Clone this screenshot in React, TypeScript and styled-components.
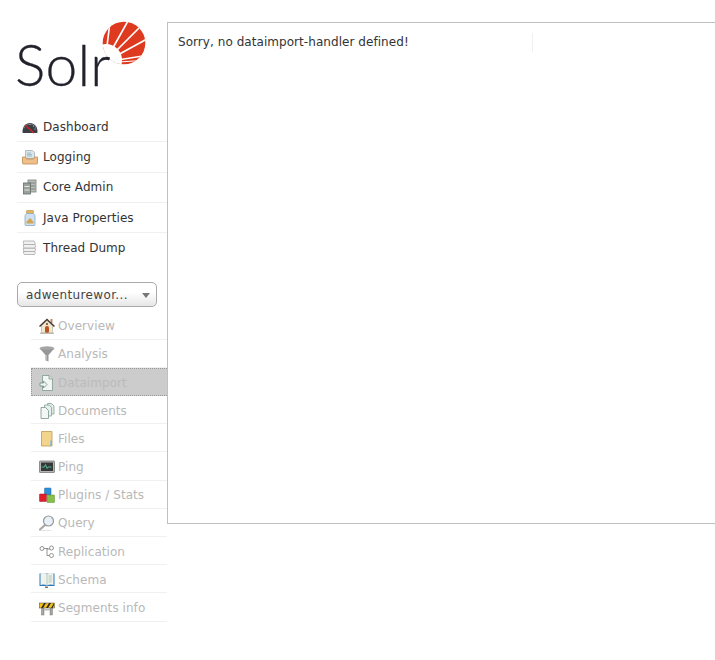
import React from "react";
import styled, {createGlobalStyle} from "styled-components";

const GlobalStyle = createGlobalStyle`
  html, body {
    margin: 0;
    padding: 0;
    height: 100%;
    overflow: hidden;
    background: #fff;
  }
  body {
    font-family: "DejaVu Sans", Verdana, sans-serif;
    font-size: 12px;
    letter-spacing: .055px;
    color: #333;
  }
`;

const Page = styled.div`
  display: flex;
  align-items: flex-start;
  width: 715px;
  height: 660px;
`;

const Sidebar = styled.aside`
  width: 167px;
  flex: none;
  padding-left: 17px;
  box-sizing: border-box;
`;

const LogoLink = styled.a`
  display: block;
  height: 112px;
  margin-left: -4px;
  padding-top: 21px;
  box-sizing: border-box;

  svg {
    display: block;
  }
`;

const MainMenu = styled.ul`
  list-style: none;
  margin: 0;
  padding: 0;
`;

const MainItem = styled.li`
  display: flex;
  align-items: center;
  gap: 5px;
  height: 30.3px;
  box-sizing: border-box;
  padding-left: 5px;
  border-bottom: 1px solid #f0f0f0;
  color: #333;

  &:last-child {
    border-bottom: none;
  }
`;

const CoreSelect = styled.div`
  display: flex;
  align-items: center;
  justify-content: space-between;
  width: 140px;
  height: 25px;
  box-sizing: border-box;
  margin-top: 19px;
  padding: 0 6px 0 8px;
  border: 1px solid #aaa;
  border-radius: 5px;
  background: linear-gradient(to bottom, #fff 0%, #fff 40%, #e6e6e6 100%);
  color: #444;
  letter-spacing: .35px;
`;

const Caret = styled.span`
  width: 0;
  height: 0;
  margin-top: 2px;
  border-left: 4.5px solid transparent;
  border-right: 4.5px solid transparent;
  border-top: 5px solid #777;
`;

const CoreMenu = styled.ul`
  list-style: none;
  margin: 4px 0 0 14px;
  padding: 0;
`;

const CoreItem = styled.li<{$active?: boolean}>`
  display: flex;
  align-items: center;
  gap: 3px;
  height: 28.2px;
  box-sizing: border-box;
  padding: 2px 0 0 ${({$active}) => $active ? "7px" : "8px"};
  color: ${({$active}) => $active ? "#bbb" : "#b8b8b8"};
  background: ${({$active}) => $active ? "#ccc" : "transparent"};
  border-bottom: ${({$active}) => $active ? "1px dotted #999" : "1px solid #f0f0f0"};
  border-top: ${({$active}) => $active ? "1px dotted #999" : "none"};
  border-left: ${({$active}) => $active ? "1px dotted #999" : "none"};
`;

const Content = styled.main`
  flex: 1;
  height: 502px;
  margin-top: 22px;
  box-sizing: border-box;
  padding: 10px;
  border: 1px solid #c0c0c0;
  border-right: none;
`;

const Message = styled.div`
  width: 355px;
  height: 19px;
  line-height: 19px;
  box-sizing: border-box;
  border-right: 1px solid #f0f0f0;
  color: #333;
`;

const Icon = styled.svg`
  display: block;
  flex: none;
  width: 16px;
  height: 16px;
`;

const rays: [number, number][] = [
    [110, 22],
    [128.5, 20],
    [141, 26],
    [147, 39],
    [146, 55.5],
];

const SolrLogo = () => (
    <svg width="136" height="80" viewBox="13 21 136 80" role="img" aria-label="Solr">
        <defs>
            <clipPath id="sun">
                <circle cx="124" cy="43" r="21.3"/>
            </clipPath>
        </defs>
        <g clipPath="url(#sun)">
            <rect x="100" y="20" width="50" height="46" fill="#dd3a20"/>
            <circle cx="106" cy="60" r="16" fill="#fff"/>
            {rays.map(([x, y]) => (
                <line key={x} x1="105" y1="62" x2={x} y2={y} stroke="#fff" strokeWidth="1.7"/>
            ))}
            <line x1="105" y1="63" x2="148" y2="60" stroke="#fff" strokeWidth="1"/>
        </g>
        <text x="15" y="86" fontFamily="Lato, sans-serif" fontWeight="300" fontSize="57" letterSpacing=".2" stroke="#22222c" strokeWidth=".3" fill="#22222c">Solr</text>
    </svg>
);

const Dashboard = () => (
    <Icon viewBox="0 0 16 16">
        <path d="M.5 13C.5 7.500 3.500 4 8 4s7.500 3.500 7.500 9c0 .7-.4 1-1 1h-13c-.6 0-1-.3-1-1z" fill="#3a3f46"/>
        <path d="M2 9.500C3 6.500 5 5 8 5s5 1.500 6 4.500" fill="none" stroke="#6b7077" strokeWidth="1"/>
        <path d="M3 6l9 8" stroke="#d8202a" strokeWidth="1.300"/>
        <circle cx="8" cy="5.500" r=".6" fill="#ccc"/><circle cx="11.500" cy="7" r=".6" fill="#ccc"/><circle cx="13" cy="10" r=".6" fill="#ccc"/>
    </Icon>
);

const Logging = () => (
    <Icon viewBox="0 0 16 16">
        <path d="M3.500 1.500h7l2 2v6h-9z" fill="#dbe6ea" stroke="#9db0b8" strokeWidth=".8"/>
        <path d="M5 4h4M5 5.500h5M5 7h5" stroke="#8fb0c0" strokeWidth=".8"/>
        <path d="M.5 8h3l1 2h7l1-2h3v6.200q0 .8-.8.8H1.300q-.8 0-.8-.8z" fill="#edc08a" stroke="#c08a50" strokeWidth=".8"/>
    </Icon>
);

const CoreAdmin = () => (
    <Icon viewBox="0 0 16 16">
        <rect x="6" y="1" width="8" height="12" fill="#b8bdb8" stroke="#7b827c" strokeWidth=".8"/>
        <path d="M7 4h6M7 7h6M7 10h6" stroke="#6d746e" strokeWidth=".8"/>
        <rect x="1.500" y="4" width="7" height="11" fill="#9aa19b" stroke="#666d68" strokeWidth=".8"/>
        <path d="M2.500 7.500h5M2.500 11h5" stroke="#e6e8e6" strokeWidth="1"/>
    </Icon>
);

const JavaProperties = () => (
    <Icon viewBox="0 0 16 16">
        <rect x="4.500" y="0.500" width="7" height="3" rx=".8" fill="#e3b45c" stroke="#b88a3a" strokeWidth=".6"/>
        <path d="M4.500 3.500h7l1.500 2v9q0 1-1 1H4q-1 0-1-1v-9z" fill="#cfe0f0" stroke="#8aa8c6" strokeWidth=".8"/>
        <path d="M4.500 13.500v-2l1.500-1 1-2h2l1 2 1.500 1v2z" fill="#d2a552"/>
    </Icon>
);

const ThreadDump = () => (
    <Icon viewBox="0 0 16 16">
        <g fill="#f1f1f1" stroke="#a8a8a8" strokeWidth=".8">
            <path d="M1.500 11.500h11q1.500 1.500 0 3h-10q-1.500-1.500-1-3z"/>
            <path d="M1.500 8h11.500q1 1.500 0 3.500H2q-1-2-.5-3.500z"/>
            <path d="M1.500 4.500h11.500q1 1.500 0 3.500H2q-1-2-.5-3.500z"/>
            <path d="M1.500 1h10.500q1.500 1.500 1 3.500H2q-1-2-.5-3.500z"/>
        </g>
    </Icon>
);

const Overview = () => (
    <Icon viewBox="0 0 16 16">
        <rect x="11.500" y="1" width="2" height="4" fill="#b98a68"/>
        <path d="M2.500 15V7.500L8 2.500l5.500 5V15z" fill="#f0e6d2" stroke="#a89878" strokeWidth=".5"/>
        <path d="M.5 8.500L8 1.500l7.500 7" fill="none" stroke="#4a3a30" strokeWidth="1.500"/>
        <rect x="6" y="8" width="4" height="7" rx="1.800" fill="#b8551f"/>
        <rect x="7" y="5" width="2" height="2" fill="#8a6a50"/>
        <rect x="1" y="14.700" width="14" height="1" fill="#a8a8a0"/>
    </Icon>
);

const Analysis = () => (
    <Icon viewBox="0 0 16 16">
        <ellipse cx="8" cy="2.500" rx="7" ry="1.800" fill="#a8a8a8" stroke="#808080" strokeWidth=".5"/>
        <path d="M1.200 3l5.300 6v5.500l3 1V9l5.300-6q-6.800 2-13.600 0z" fill="#979797"/>
        <path d="M7.500 9v6" stroke="#c4c4c4" strokeWidth=".8"/>
    </Icon>
);

const Dataimport = () => (
    <Icon viewBox="0 0 16 16">
        <path d="M3.500 .5h6.500l3.500 3.500v11.500h-10z" fill="#f2f6f2" stroke="#7e9a90" strokeWidth=".8"/>
        <path d="M10 .5V4h3.500" fill="#d6e4dc" stroke="#7e9a90" strokeWidth=".8"/>
        <path d="M1 8h3.500V6l3.500 3.500L4.500 13v-2H1z" fill="#f2f6f2" stroke="#6b8a7e" strokeWidth=".8"/>
    </Icon>
);

const Documents = () => (
    <Icon viewBox="0 0 16 16">
        <path d="M8.500 .5h4l2.500 2.500v8h-6.500z" fill="#dfe9e6" stroke="#87a19a" strokeWidth=".8"/>
        <path d="M5.500 2h4.500l2.500 2.500v8.500h-7z" fill="#e8f0ed" stroke="#87a19a" strokeWidth=".8"/>
        <path d="M2 4.500h4.500L9.500 7.500v8H2z" fill="#f3f7f5" stroke="#7a958e" strokeWidth=".8"/>
    </Icon>
);

const Files = () => (
    <Icon viewBox="0 0 16 16">
        <path d="M2.500 .5h10.500v14.500H2.500z" fill="#f2d48c" stroke="#c09a50" strokeWidth=".8"/>
        <path d="M13 8.500v6.500h-1.700v-5z" fill="#7fb6e0"/>
    </Icon>
);

const Ping = () => (
    <Icon viewBox="0 0 16 16">
        <rect x=".5" y="2" width="15" height="11.500" rx=".6" fill="#b5b5b5" stroke="#7a7a7a" strokeWidth=".8"/>
        <rect x="2" y="3.500" width="12" height="8.500" fill="#34393a"/>
        <path d="M2.500 8h3l1-2.500 1.500 4 1-1.500h3.500" fill="none" stroke="#5fd0a8" strokeWidth=".8"/>
    </Icon>
);

const Plugins = () => (
    <Icon viewBox="0 0 16 16">
        <rect x="5.500" y="1" width="6.500" height="7" rx=".5" fill="#2f8fd8" stroke="#1e6aa8" strokeWidth=".5"/>
        <rect x=".5" y="7" width="7" height="7.500" rx=".5" fill="#e01e2e" stroke="#a81522" strokeWidth=".5"/>
        <rect x="8" y="8" width="7.500" height="7.500" rx=".5" fill="#86c04a" stroke="#5c9030" strokeWidth=".5"/>
    </Icon>
);

const Query = () => (
    <Icon viewBox="0 0 16 16">
        <path d="M6 10l-5 4.500" stroke="#a8a8a8" strokeWidth="2.200" strokeLinecap="round"/>
        <circle cx="9.500" cy="6" r="5" fill="#e6f0f6" stroke="#9a9a9a" strokeWidth="1.200"/>
        <path d="M1 15.500h11" stroke="#ddd" strokeWidth=".8"/>
    </Icon>
);

const Replication = () => (
    <Icon viewBox="0 0 16 16">
        <path d="M4 4.500h5M8 4.500v7h3M8 5h3" fill="none" stroke="#888" strokeWidth=".9"/>
        <circle cx="3" cy="4.500" r="2" fill="#fff" stroke="#888" strokeWidth=".9"/>
        <circle cx="12.500" cy="4" r="2" fill="#fff" stroke="#888" strokeWidth=".9"/>
        <circle cx="12.500" cy="11.500" r="2" fill="#fff" stroke="#888" strokeWidth=".9"/>
    </Icon>
);

const Schema = () => (
    <Icon viewBox="0 0 16 16">
        <path d="M.5 1.500h15v12.500H.5z" fill="#2c78bc"/>
        <path d="M1.500 1.500Q5 .5 8 2q3-1.500 6.500-.5v11.500Q11 12 8 13.500 5 12 1.500 13z" fill="#eef3ec"/>
        <path d="M8 2v11.500" stroke="#9aa" strokeWidth=".6"/>
        <path d="M9.500 4h3.500M9.500 6h3.500M9.500 8h3.500M9.500 10h3" stroke="#9ab0a8" strokeWidth=".7"/>
        <path d="M6 15.200h3" stroke="#333" strokeWidth="1"/>
    </Icon>
);

const Segments = () => (
    <Icon viewBox="0 0 16 16">
        <rect x="2.500" y="7" width="2.500" height="8" fill="#a8a8a0" stroke="#666" strokeWidth=".4"/>
        <rect x="11" y="7" width="2.500" height="8" fill="#a8a8a0" stroke="#666" strokeWidth=".4"/>
        <rect x="5" y="9" width="6" height="1.500" fill="#bbb"/>
        <rect x=".5" y="3" width="15" height="5" fill="#f2c21a" stroke="#444" strokeWidth=".5"/>
        <path d="M2 8l3-5h2L4 8zM7 8l3-5h2L9 8zM12 8l3-5v2l-1.500 3z" fill="#2a2a2a"/>
    </Icon>
);

const mainItems: [string, React.FC][] = [
    ["Dashboard", Dashboard],
    ["Logging", Logging],
    ["Core Admin", CoreAdmin],
    ["Java Properties", JavaProperties],
    ["Thread Dump", ThreadDump],
];

const coreItems: [string, React.FC][] = [
    ["Overview", Overview],
    ["Analysis", Analysis],
    ["Dataimport", Dataimport],
    ["Documents", Documents],
    ["Files", Files],
    ["Ping", Ping],
    ["Plugins / Stats", Plugins],
    ["Query", Query],
    ["Replication", Replication],
    ["Schema", Schema],
    ["Segments info", Segments],
];

const App = () => {
    return <Page>
        <GlobalStyle/>
        <Sidebar>
            <LogoLink><SolrLogo/></LogoLink>
            <MainMenu>
                {mainItems.map(([label, ItemIcon]) => (
                    <MainItem key={label}><ItemIcon/><span>{label}</span></MainItem>
                ))}
            </MainMenu>
            <CoreSelect><span>adwenturewor...</span><Caret/></CoreSelect>
            <CoreMenu>
                {coreItems.map(([label, ItemIcon]) => (
                    <CoreItem key={label} $active={label === "Dataimport"}><ItemIcon/><span>{label}</span></CoreItem>
                ))}
            </CoreMenu>
        </Sidebar>
        <Content>
            <Message>Sorry, no dataimport-handler defined!</Message>
        </Content>
    </Page>
}

export default App;
